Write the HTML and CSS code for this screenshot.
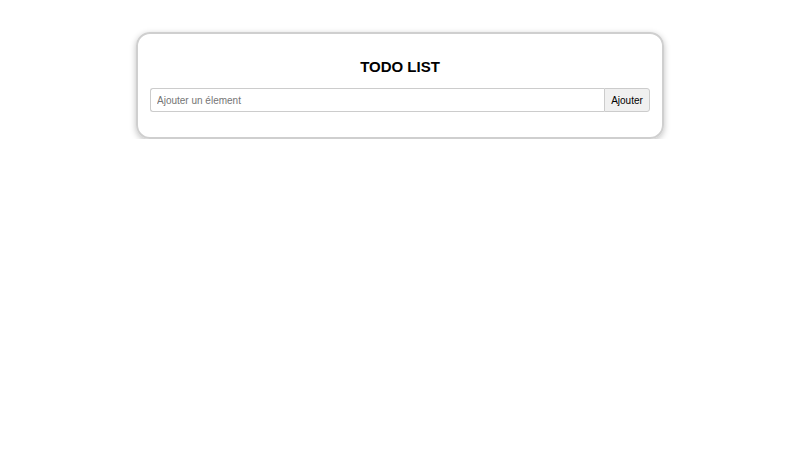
FILE: index.html
```html
<!DOCTYPE html>
<html lang="fr">
<head>
<meta charset="utf-8">
<title>Todo List</title>
<link rel="stylesheet" href="styles.css">
</head>
<body>
<div class="card">
  <h1 class="title">TODO LIST</h1>
  <form class="add-form">
    <input class="add-input" type="text" placeholder="Ajouter un élement">
    <button class="add-btn" type="button">Ajouter</button>
  </form>
</div>
</body>
</html>
```

FILE: styles.css
```css
html, body {
  margin: 0;
  padding: 0;
  background: #fff;
  font-family: "Liberation Sans", Arial, sans-serif;
}
.card {
  box-sizing: border-box;
  width: 528px;
  margin: 32px auto 0;
  padding: 12px 12px 25px;
  border: 2px solid #cfcfcf;
  border-radius: 14px;
  box-shadow: 0 2px 6px rgba(0, 0, 0, 0.25);
}
.title {
  margin: 12px 0 13px;
  text-align: center;
  font-size: 15px;
  font-weight: bold;
  color: #000;
  line-height: 17px;
}
.add-form {
  display: flex;
  margin: 0;
}
.add-input {
  flex: 1;
  box-sizing: border-box;
  height: 24px;
  margin: 0;
  padding: 0 6px;
  border: 1px solid #ccc;
  border-right: none;
  border-radius: 3px 0 0 3px;
  font-family: "Liberation Sans", Arial, sans-serif;
  font-size: 10px;
  color: #333;
  outline: none;
}
.add-input::placeholder {
  color: #757575;
}
.add-btn {
  box-sizing: border-box;
  height: 24px;
  width: 46px;
  margin: 0;
  padding: 0;
  border: 1px solid #ccc;
  border-radius: 0 3px 3px 0;
  background: #f0f0f0;
  font-family: "Liberation Sans", Arial, sans-serif;
  font-size: 10px;
  color: #000;
}
```
